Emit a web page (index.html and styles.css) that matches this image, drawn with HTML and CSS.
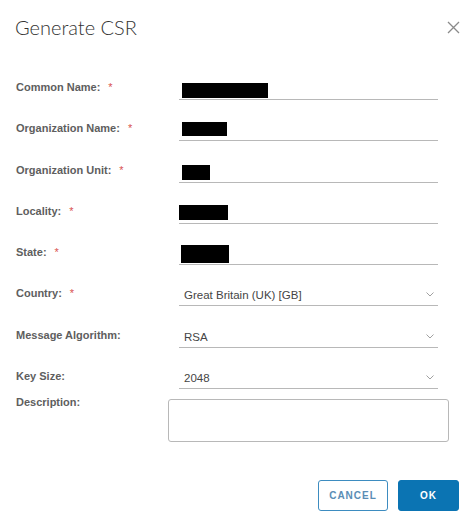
FILE: index.html
```html
<!DOCTYPE html>
<html lang="en">
<head>
<meta charset="utf-8">
<title>Generate CSR</title>
<link rel="stylesheet" href="styles.css">
</head>
<body>
<div class="dialog">
  <div class="header">
    <h1 class="title">Generate CSR</h1>
    <button class="close" aria-label="Close">
      <svg width="13" height="13" viewBox="0 0 13 13"><path d="M1 1 L12 12 M12 1 L1 12" stroke="#8a8a8a" stroke-width="1.3" fill="none"/></svg>
    </button>
  </div>
  <form class="form">
    <div class="row">
      <label class="label">Common Name:<span class="req">*</span></label>
      <div class="input"><span class="redact r1"></span></div>
    </div>
    <div class="row">
      <label class="label">Organization Name:<span class="req">*</span></label>
      <div class="input"><span class="redact r2"></span></div>
    </div>
    <div class="row">
      <label class="label">Organization Unit:<span class="req">*</span></label>
      <div class="input"><span class="redact r3"></span></div>
    </div>
    <div class="row">
      <label class="label">Locality:<span class="req">*</span></label>
      <div class="input"><span class="redact r4"></span></div>
    </div>
    <div class="row">
      <label class="label">State:<span class="req">*</span></label>
      <div class="input"><span class="redact r5"></span></div>
    </div>
    <div class="row">
      <label class="label">Country:<span class="req">*</span></label>
      <div class="input select"><span class="value">Great Britain (UK) [GB]</span>
        <svg class="chev" width="8" height="5" viewBox="0 0 8 5"><path d="M0.5 0.5 L4 4 L7.5 0.5" stroke="#a0a0a0" stroke-width="1" fill="none"/></svg></div>
    </div>
    <div class="row">
      <label class="label">Message Algorithm:</label>
      <div class="input select"><span class="value">RSA</span>
        <svg class="chev" width="8" height="5" viewBox="0 0 8 5"><path d="M0.5 0.5 L4 4 L7.5 0.5" stroke="#a0a0a0" stroke-width="1" fill="none"/></svg></div>
    </div>
    <div class="row">
      <label class="label">Key Size:</label>
      <div class="input select"><span class="value">2048</span>
        <svg class="chev" width="8" height="5" viewBox="0 0 8 5"><path d="M0.5 0.5 L4 4 L7.5 0.5" stroke="#a0a0a0" stroke-width="1" fill="none"/></svg></div>
    </div>
    <div class="row-desc">
      <label class="label desc-label">Description:</label>
      <div class="textarea"></div>
    </div>
  </form>
  <div class="footer">
    <button class="btn btn-outline">CANCEL</button>
    <button class="btn btn-primary">OK</button>
  </div>
</div>
</body>
</html>
```
FILE: styles.css
```css
* { box-sizing: border-box; }
html, body { margin: 0; padding: 0; background: #fff; }
body { font-family: "Liberation Sans", Arial, sans-serif; color: #5e5e5e; }

.dialog {
  width: 474px;
  height: 526px;
  padding: 13px 14px 0 16px;
}

.header {
  display: flex;
  justify-content: space-between;
  align-items: center;
  height: 28px;
}
.title {
  margin: 0 0 0 -1px;
  font-family: "Lato", sans-serif;
  font-weight: 300;
  font-size: 20px;
  line-height: 28px;
  color: #333;
}
.close {
  border: 0;
  background: none;
  padding: 0;
  width: 13px;
  height: 13px;
  display: flex;
  margin-top: 1px;
}

.form { margin-top: 17.7px; }

.row {
  display: grid;
  grid-template-columns: 163px 259px;
  height: 41.3px;
  align-items: end;
}
.label {
  font-size: 11px;
  font-weight: 700;
  line-height: 14px;
  color: #5e5e5e;
  padding-bottom: 6px;
  white-space: nowrap;
}
.req {
  color: #d9534f;
  margin-left: 8px;
  font-weight: 400;
  font-size: 11px;
}
.input {
  height: 26px;
  border-bottom: 1px solid #b8b8b8;
  display: flex;
  align-items: flex-end;
}
.redact { display: block; background: #000; }
.r1 { width: 86px; height: 15px; margin: 0 0 1px 3px; }
.r2 { width: 45px; height: 14px; margin: 0 0 4px 3px; }
.r3 { width: 28px; height: 15px; margin: 0 0 2px 3px; }
.r4 { width: 49px; height: 15px; margin: 0 0 3px 0; }
.r5 { width: 48px; height: 18px; margin: 0 0 1px 2px; }

.select {
  justify-content: space-between;
  padding: 0 4px 3px 5px;
}
.value {
  font-size: 11.5px;
  line-height: 14px;
  color: #454545;
}
.chev { margin-bottom: 5px; }

.row-desc {
  display: grid;
  grid-template-columns: 152px 281px;
  align-items: start;
  padding-top: 6px;
}
.desc-label { padding-bottom: 0; }
.textarea {
  margin-top: 4px;
  height: 43px;
  border: 1px solid #b8b8b8;
  border-radius: 3px;
}

.footer {
  display: flex;
  justify-content: flex-end;
  gap: 10px;
  margin-top: 38px;
  padding-right: 1px;
}
.btn {
  height: 31px;
  border-radius: 3px;
  font-family: "Liberation Sans", Arial, sans-serif;
  font-weight: 700;
  font-size: 10px;
  letter-spacing: 1px;
  padding: 0;
  cursor: pointer;
}
.btn-outline {
  width: 70px;
  background: #fff;
  border: 1px solid #3d8cc0;
  color: #5a8db5;
}
.btn-primary {
  width: 61px;
  background: #0b74b3;
  border: 1px solid #0b74b3;
  color: #fff;
}
```
